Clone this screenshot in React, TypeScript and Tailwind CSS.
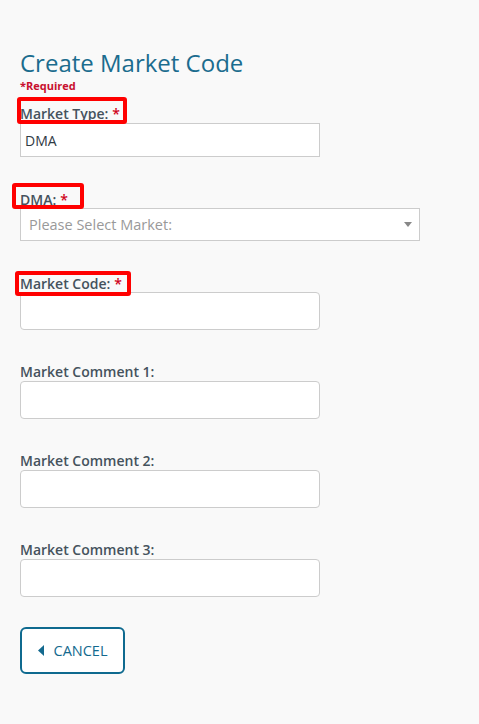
const FONT = "font-['Open_Sans',_'Liberation_Sans',_sans-serif]"

function Marked({
  box,
  children,
}: {
  box: string
  children: React.ReactNode
}) {
  return (
    <div className="relative w-fit">
      {children}
      {/* annotation overlay */}
      <span
        className={`pointer-events-none absolute rounded-[3px] border-4 border-[#ff0000] ${box}`}
      />
    </div>
  )
}

function Label({ text, required }: { text: string; required?: boolean }) {
  return (
    <label className="block text-[14px] leading-[19px] font-semibold text-[#45525d]">
      {text}
      {required && <span className="ml-1 text-[#d0021b]">*</span>}
    </label>
  )
}

function TextBox({ className = '' }: { className?: string }) {
  return (
    <input
      type="text"
      className={`block w-[300px] rounded-[4px] border border-[#cccccc] bg-white px-2 text-[14px] text-[#333] outline-none ${className}`}
    />
  )
}

export default function App() {
  return (
    <div
      className={`${FONT} min-h-screen w-full bg-[#f9f9f9] pt-[47px] pl-[20px]`}
    >
      <h1 className="text-[24px] leading-[32px] font-normal text-[#1b6c8e]">
        Create Market Code
      </h1>
      <p className="text-[11px] leading-[14px] font-bold text-[#c8102e]">
        *Required
      </p>

      <div className="mt-[11px]">
        <Marked box="-left-[3px] -top-[7px] h-[27px] w-[110px]">
          <Label text="Market Type:" required />
        </Marked>
        <div className="flex h-[34px] w-[300px] items-center border border-[#cccccc] bg-white px-[4px] text-[14px] text-[#2f3a44]">
          DMA
        </div>
      </div>

      <div className="mt-[33px]">
        <Marked box="-left-[8px] -top-[7px] h-[26px] w-[72px]">
          <Label text="DMA:" required />
        </Marked>
        <div className="-mt-px flex h-[33px] w-[400px] items-center justify-between border border-[#cccccc] bg-white pr-[7px] pl-[8px] text-[14.5px] text-[#999999]">
          <span>Please Select Market:</span>
          <svg width="8" height="5" viewBox="0 0 8 5">
            <path d="M0 0 H8 L4 5 Z" fill="#888888" />
          </svg>
        </div>
      </div>

      <div className="mt-[33px]">
        <Marked box="-left-[5px] -top-[3px] h-[25px] w-[116px]">
          <Label text="Market Code:" required />
        </Marked>
        <TextBox className="-mt-px h-[38px]" />
      </div>

      {['Market Comment 1:', 'Market Comment 2:', 'Market Comment 3:'].map(
        (t) => (
          <div key={t} className="mt-[32px]">
            <Label text={t} />
            <TextBox className="h-[38px]" />
          </div>
        ),
      )}

      <button
        type="button"
        className="mt-[30px] flex h-[47px] w-[105px] items-center justify-center gap-[10px] rounded-[6px] border-2 border-[#0f6a8f] bg-white text-[14.5px] text-[#13698e]"
      >
        <svg width="6" height="11" viewBox="0 0 6 11">
          <path d="M6 0 V11 L0 5.5 Z" fill="#13698e" />
        </svg>
        CANCEL
      </button>
      <div className="h-[50px]" />
    </div>
  )
}
